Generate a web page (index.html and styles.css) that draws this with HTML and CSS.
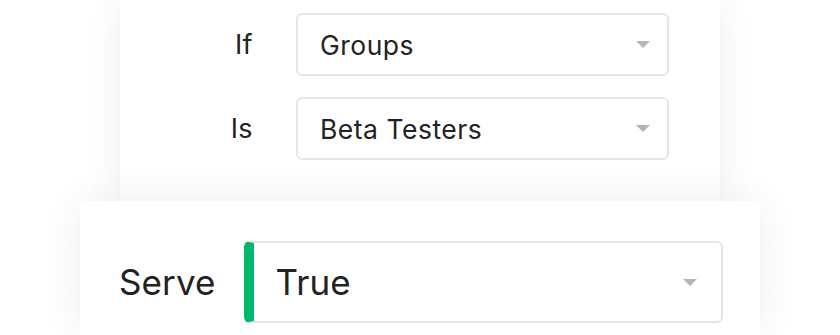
FILE: index.html
```html
<!DOCTYPE html>
<html lang="en">
<head>
<meta charset="utf-8">
<title>Targeting rule</title>
<link rel="stylesheet" href="styles.css">
</head>
<body>
<div class="stage">
  <section class="card card-rules">
    <div class="row">
      <span class="label">If</span>
      <div class="select">
        <span class="value">Groups</span>
        <span class="caret"></span>
      </div>
    </div>
    <div class="row">
      <span class="label">Is</span>
      <div class="select">
        <span class="value">Beta Testers</span>
        <span class="caret"></span>
      </div>
    </div>
  </section>
  <section class="card card-serve">
    <div class="serve-row">
      <span class="label label-lg">Serve</span>
      <div class="select select-lg">
        <span class="value">True</span>
        <span class="caret"></span>
      </div>
    </div>
  </section>
</div>
</body>
</html>
```

FILE: styles.css
```css
html, body {
  margin: 0;
  padding: 0;
  background: #ffffff;
}
body {
  width: 840px;
  height: 335px;
  overflow: hidden;
  font-family: Inter, "Noto Sans", "Liberation Sans", sans-serif;
  color: #222222;
}
.stage {
  display: flex;
  flex-direction: column;
  align-items: flex-start;
}
.card {
  background: #ffffff;
  box-sizing: border-box;
}
.card-rules {
  margin-left: 120px;
  width: 600px;
  height: 201px;
  padding: 13px 0 0 0;
  display: flex;
  flex-direction: column;
  gap: 21px;
  box-shadow: 0 0 36px rgba(0, 0, 0, 0.07);
}
.row {
  display: flex;
  align-items: center;
  height: 63px;
}
.label {
  font-size: 27px;
  letter-spacing: 0.4px;
  width: 133px;
  text-align: right;
  margin-right: 43px;
  flex: none;
}
.select {
  box-sizing: border-box;
  width: 373px;
  height: 63px;
  border: 2px solid #e6e6e6;
  border-radius: 6px;
  display: flex;
  align-items: center;
  justify-content: space-between;
  padding: 0 17px 0 22px;
  font-size: 26.5px;
  letter-spacing: 0.5px;
  background: #ffffff;
}
.caret {
  width: 0;
  height: 0;
  border-left: 7px solid transparent;
  border-right: 7px solid transparent;
  border-top: 7px solid #b5b5b5;
  flex: none;
}
.card-serve {
  position: relative;
  z-index: 1;
  margin-left: 80px;
  width: 680px;
  height: 134px;
  padding: 40px 0 0 39px;
  box-shadow: 0 0 40px rgba(0, 0, 0, 0.07);
}
.serve-row {
  display: flex;
  align-items: center;
}
.label-lg {
  width: auto;
  font-size: 35px;
  letter-spacing: 0.1px;
  margin-right: 29px;
}
.select-lg {
  width: 479px;
  height: 82px;
  border-left: 10px solid #00b86b;
  font-size: 35px;
  letter-spacing: 0.1px;
  padding: 0 24px 0 21px;
}
```
